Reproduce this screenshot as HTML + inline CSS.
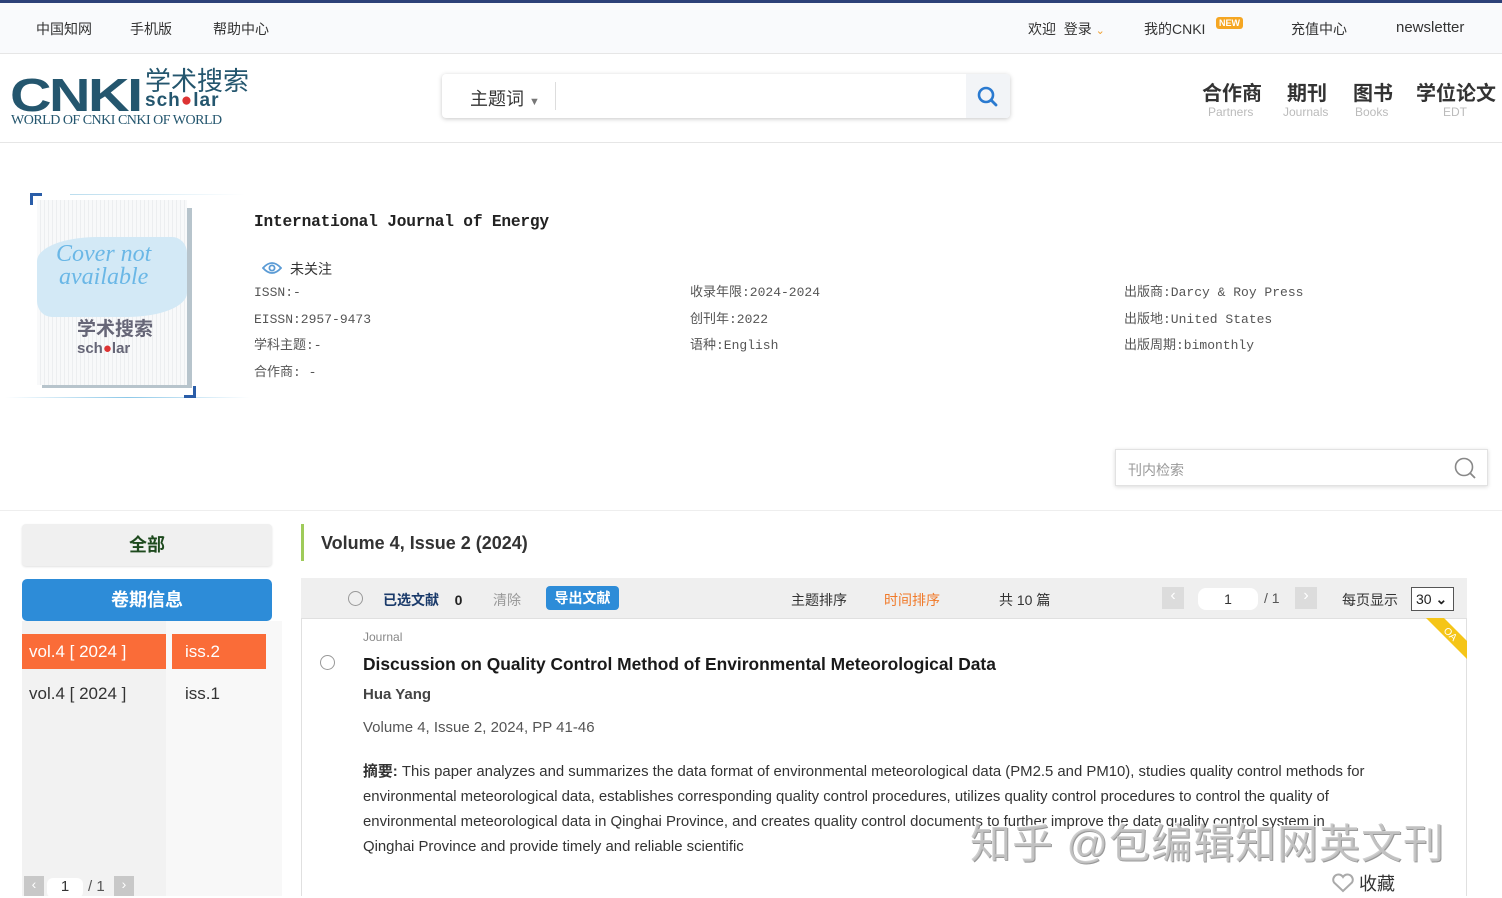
<!DOCTYPE html>
<html><head><meta charset="utf-8"><style>
*{margin:0;padding:0;box-sizing:border-box}
body{width:1502px;height:896px;overflow:hidden;background:#fff;font-family:"Liberation Sans","Noto Sans CJK SC",sans-serif;color:#333;position:relative}
.a{position:absolute;white-space:nowrap}
.mono{font-family:"Liberation Mono","Noto Sans CJK SC",monospace}
</style></head><body>
<div class="a" style="left:0;top:0;width:1502px;height:3px;background:#2d4178"></div>
<div class="a" style="left:0;top:3px;width:1502px;height:51px;background:#f9fafc;border-bottom:1px solid #e6e6e6"></div>
<div class="a" style="left:36px;top:19px;font-size:14px;color:#333">中国知网</div>
<div class="a" style="left:130px;top:19px;font-size:14px">手机版</div>
<div class="a" style="left:213px;top:19px;font-size:14px">帮助中心</div>
<div class="a" style="left:1028px;top:19px;font-size:14px">欢迎&nbsp; 登录 <span style="color:#f0a030;font-size:11px">&#8964;</span></div>
<div class="a" style="left:1144px;top:19px;font-size:14px">我的CNKI</div>
<div class="a" style="left:1216px;top:17px;font-size:9px;color:#fff;background:#f5a623;border-radius:3px;padding:1px 3px;font-weight:bold">NEW</div>
<div class="a" style="left:1291px;top:19px;font-size:14px">充值中心</div>
<div class="a" style="left:1396px;top:19px;font-size:15px">newsletter</div>
<div class="a" style="left:0;top:142px;width:1502px;height:1px;background:#e6e6e6"></div>
<!-- logo -->
<div class="a" style="left:10px;top:68px;font-size:46px;font-weight:900;color:#24566e;letter-spacing:-2px;font-family:'Liberation Sans',sans-serif;transform:scaleX(1.25);transform-origin:left">CNKI</div>
<div class="a" style="left:145px;top:68px;font-size:26px;color:#24566e;line-height:26px">学术搜索</div>
<div class="a" style="left:145px;top:92px;font-size:19px;font-weight:900;color:#24566e;line-height:18px;letter-spacing:1px">sch<span style="color:#d33">●</span>lar</div>
<div class="a" style="left:11px;top:113px;font-size:14px;color:#24566e;font-family:'Liberation Serif',serif;letter-spacing:-0.5px">WORLD OF CNKI CNKI OF WORLD</div>
<!-- search -->
<div class="a" style="left:442px;top:74px;width:568px;height:44px;background:#fff;border-radius:4px;box-shadow:0 1px 5px rgba(0,0,0,.22)"></div>
<div class="a" style="left:470px;top:85px;font-size:18px;color:#333">主题词 <span style="color:#777;font-size:11px">▼</span></div>
<div class="a" style="left:555px;top:82px;width:1px;height:28px;background:#ddd"></div>
<div class="a" style="left:966px;top:74px;width:44px;height:44px;background:#f2f4f7;border-radius:0 4px 4px 0"></div>
<svg class="a" style="left:976px;top:85px" width="24" height="24" viewBox="0 0 24 24"><circle cx="10" cy="10" r="7" fill="none" stroke="#2a7ad0" stroke-width="2.6"/><path d="M15 15l5 5" stroke="#2a7ad0" stroke-width="2.8" stroke-linecap="round"/></svg>
<div class="a" style="left:1202px;top:77px;font-size:20px;font-weight:bold;color:#333">合作商</div>
<div class="a" style="left:1208px;top:105px;font-size:12px;color:#bbb">Partners</div>
<div class="a" style="left:1287px;top:77px;font-size:20px;font-weight:bold;color:#333">期刊</div>
<div class="a" style="left:1283px;top:105px;font-size:12px;color:#bbb">Journals</div>
<div class="a" style="left:1353px;top:77px;font-size:20px;font-weight:bold;color:#333">图书</div>
<div class="a" style="left:1355px;top:105px;font-size:12px;color:#bbb">Books</div>
<div class="a" style="left:1416px;top:77px;font-size:20px;font-weight:bold;color:#333">学位论文</div>
<div class="a" style="left:1443px;top:105px;font-size:12px;color:#bbb">EDT</div>
<!-- cover -->
<div class="a" style="left:5px;top:397px;width:245px;height:1px;background:linear-gradient(90deg,#fff,#8cc8e8,#fff)"></div>
<div class="a" style="left:70px;top:194px;width:175px;height:1px;background:linear-gradient(90deg,#bde,#fff)"></div>
<div class="a" style="left:30px;top:193px;width:12px;height:12px;border-left:3px solid #2a5da8;border-top:3px solid #2a5da8"></div>
<div class="a" style="left:184px;top:386px;width:12px;height:12px;border-right:3px solid #2a5da8;border-bottom:3px solid #2a5da8"></div>
<div class="a" style="left:42px;top:208px;width:150px;height:180px;background:#b7c4cc"></div>
<div class="a" style="left:37px;top:200px;width:150px;height:185px;background:repeating-linear-gradient(90deg,#f8f9fa 0 3px,#eceef0 3px 4px)"></div>
<div class="a" style="left:37px;top:237px;width:150px;height:80px;background:#d3e9f6;border-radius:40% 10% 40% 10%/30% 20% 30% 20%"></div>
<div class="a" style="left:56px;top:243px;font-size:24px;color:#6ab7e6;font-style:italic;font-family:'Liberation Serif',serif;line-height:23px;text-align:center">Cover not<br>available</div>
<div class="a" style="left:77px;top:321px;font-size:19px;color:#667;line-height:18px;font-weight:bold">学术搜索<br><span style="font-size:15px">sch<span style="color:#d33">●</span>lar</span></div>
<!-- info -->
<div class="a mono" style="left:254px;top:213px;font-size:16.2px;color:#222;font-weight:bold;letter-spacing:-0.2px">International Journal of Energy</div>
<svg class="a" style="left:262px;top:260px" width="20" height="16" viewBox="0 0 20 16"><path d="M1 8Q10 -2 19 8Q10 18 1 8Z" fill="none" stroke="#5b9bd5" stroke-width="1.8"/><circle cx="10" cy="8" r="2.6" fill="none" stroke="#5b9bd5" stroke-width="1.8"/></svg>
<div class="a" style="left:290px;top:259px;font-size:14px;color:#333">未关注</div>
<div class="a mono" style="left:254px;top:280px;font-size:13px;color:#555;line-height:26.5px">ISSN:-<br>EISSN:2957-9473<br>学科主题:-<br>合作商: -</div>
<div class="a mono" style="left:690px;top:280px;font-size:13px;color:#555;line-height:26.5px">收录年限:2024-2024<br>创刊年:2022<br>语种:English</div>
<div class="a mono" style="left:1124px;top:280px;font-size:13px;color:#555;line-height:26.5px">出版商:Darcy &amp; Roy Press<br>出版地:United States<br>出版周期:bimonthly</div>
<!-- search within -->
<div class="a" style="left:1115px;top:449px;width:373px;height:37px;border:1px solid #e2e2e2;box-shadow:0 1px 4px rgba(0,0,0,.15);background:#fff"></div>
<div class="a" style="left:1128px;top:460px;font-size:14px;color:#999">刊内检索</div>
<svg class="a" style="left:1453px;top:456px" width="24" height="24" viewBox="0 0 24 24"><circle cx="11" cy="11" r="8.5" fill="none" stroke="#888" stroke-width="1.6"/><path d="M17 17l5 5" stroke="#888" stroke-width="1.8"/></svg>
<div class="a" style="left:0;top:510px;width:1502px;height:1px;background:#eee"></div>
<!-- sidebar -->
<div class="a" style="left:22px;top:524px;width:250px;height:42px;background:#f0f0f0;border-radius:4px;box-shadow:0 1px 2px rgba(0,0,0,.12);text-align:center;line-height:42px;font-size:18px;font-weight:bold;color:#1e4a1e">全部</div>
<div class="a" style="left:22px;top:579px;width:250px;height:42px;background:#2d8cd8;border-radius:5px;text-align:center;line-height:42px;font-size:18px;font-weight:bold;color:#fff">卷期信息</div>
<div class="a" style="left:22px;top:621px;width:144px;height:275px;background:#f2f2f2"></div>
<div class="a" style="left:166px;top:621px;width:116px;height:275px;background:#f8f8f8"></div>
<div class="a" style="left:22px;top:634px;width:144px;height:35px;background:#fa6c38;color:#fff;font-size:17px;line-height:35px;padding-left:7px">vol.4 [ 2024 ]</div>
<div class="a" style="left:172px;top:634px;width:94px;height:35px;background:#fa6c38;color:#fff;font-size:17px;line-height:35px;padding-left:13px">iss.2</div>
<div class="a" style="left:29px;top:684px;font-size:17px;color:#333">vol.4 [ 2024 ]</div>
<div class="a" style="left:185px;top:684px;font-size:17px;color:#333">iss.1</div>
<div class="a" style="left:24px;top:876px;width:20px;height:20px;background:#c8c8c8;color:#fff;font-size:14px;text-align:center">‹</div>
<div class="a" style="left:47px;top:878px;width:36px;height:20px;background:#fff;border-radius:6px;font-size:15px;text-align:center;color:#333">1</div>
<div class="a" style="left:88px;top:878px;font-size:15px;color:#555">/ 1</div>
<div class="a" style="left:114px;top:876px;width:20px;height:20px;background:#c8c8c8;color:#fff;font-size:14px;text-align:center">›</div>
<!-- main -->
<div class="a" style="left:301px;top:524px;width:3px;height:37px;background:#9fcb5a"></div>
<div class="a" style="left:321px;top:533px;font-size:18px;font-weight:bold;color:#333">Volume 4, Issue 2 (2024)</div>
<div class="a" style="left:301px;top:578px;width:1166px;height:40px;background:#efefef"></div>
<div class="a" style="left:301px;top:618px;width:1166px;height:278px;border-left:1px solid #e0e0e0;border-right:1px solid #e0e0e0;border-top:1px solid #e0e0e0"></div>
<div class="a" style="left:348px;top:591px;width:15px;height:15px;border:1px solid #999;border-radius:50%"></div>
<div class="a" style="left:383px;top:590px;font-size:14px;font-weight:bold;color:#1a3a6a">已选文献&nbsp;&nbsp;&nbsp; <span style="color:#222">0</span></div>
<div class="a" style="left:493px;top:590px;font-size:14px;color:#999">清除</div>
<div class="a" style="left:546px;top:586px;width:73px;height:24px;background:#2d8cd8;border-radius:4px;color:#fff;font-size:14px;font-weight:bold;text-align:center;line-height:24px">导出文献</div>
<div class="a" style="left:791px;top:590px;font-size:14px;color:#333">主题排序</div>
<div class="a" style="left:884px;top:590px;font-size:14px;color:#f07a2a">时间排序</div>
<div class="a" style="left:999px;top:590px;font-size:14px;color:#333">共 10 篇</div>
<div class="a" style="left:1162px;top:587px;width:22px;height:22px;background:#dcdcdc;color:#fff;text-align:center;font-size:16px">‹</div>
<div class="a" style="left:1198px;top:588px;width:60px;height:22px;background:#fff;border-radius:8px;text-align:center;font-size:14px;line-height:22px;color:#333">1</div>
<div class="a" style="left:1264px;top:590px;font-size:14px;color:#555">/ 1</div>
<div class="a" style="left:1295px;top:587px;width:22px;height:22px;background:#dcdcdc;color:#fff;text-align:center;font-size:16px">›</div>
<div class="a" style="left:1342px;top:590px;font-size:14px;color:#333">每页显示</div>
<div class="a" style="left:1411px;top:587px;width:43px;height:24px;border:1px solid #555;background:#fff;font-size:14px;line-height:22px;padding-left:4px;color:#222">30 <b>&#8964;</b></div>
<svg class="a" style="left:1426px;top:618px" width="41" height="41" viewBox="0 0 41 41"><path d="M0 0H18L41 23V41Z" fill="#f5c518"/><text x="18" y="17" font-size="10" fill="#fff" transform="rotate(45 22 14)" font-family="Liberation Sans">OA</text></svg>
<div class="a" style="left:363px;top:630px;font-size:12px;color:#888">Journal</div>
<div class="a" style="left:320px;top:655px;width:15px;height:15px;border:1px solid #999;border-radius:50%"></div>
<div class="a" style="left:363px;top:654px;font-size:17.4px;font-weight:bold;color:#1a1a1a">Discussion on Quality Control Method of Environmental Meteorological Data</div>
<div class="a" style="left:363px;top:686px;font-size:15px;font-weight:bold;color:#444">Hua Yang</div>
<div class="a" style="left:363px;top:719px;font-size:15px;color:#555">Volume 4, Issue 2, 2024, PP 41-46</div>
<div class="a" style="left:363px;top:760px;width:1015px;font-size:14.9px;color:#333;line-height:25px;white-space:normal"><b>摘要:</b> This paper analyzes and summarizes the data format of environmental meteorological data (PM2.5 and PM10), studies quality control methods for environmental meteorological data, establishes corresponding quality control procedures, utilizes quality control procedures to control the quality of environmental meteorological data in Qinghai Province, and creates quality control documents to further improve the data quality control system in Qinghai Province and provide timely and reliable scientific</div>
<div class="a" style="left:970px;top:810px;font-size:41px;color:rgba(200,200,200,.85);text-shadow:1px 1px 0 #999,-1px -1px 0 #fff;letter-spacing:1px">知乎 @包编辑知网英文刊</div>
<svg class="a" style="left:1331px;top:873px" width="24" height="20" viewBox="0 0 24 20"><path d="M12 18L3 9.5A5 5 0 0 1 12 4A5 5 0 0 1 21 9.5Z" fill="none" stroke="#aaa" stroke-width="2"/></svg>
<div class="a" style="left:1359px;top:870px;font-size:18px;color:#333">收藏</div>
</body></html>
